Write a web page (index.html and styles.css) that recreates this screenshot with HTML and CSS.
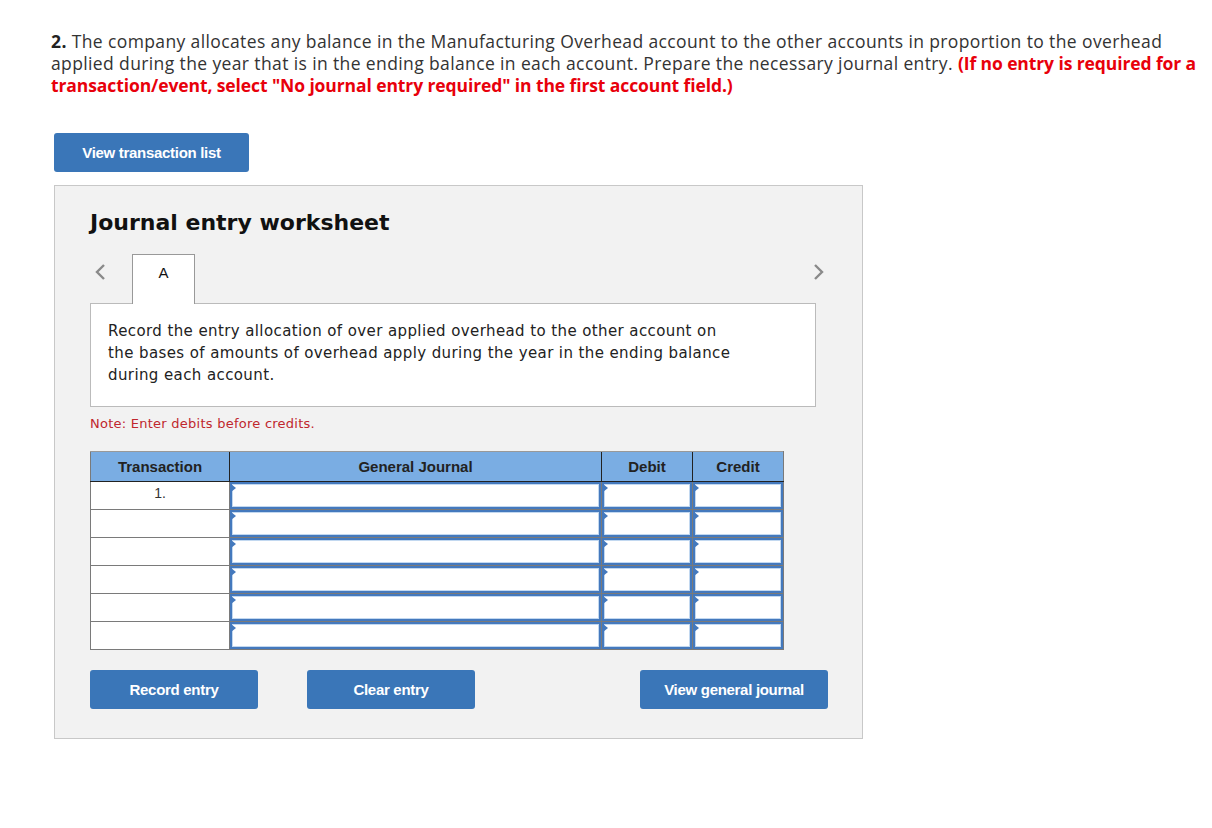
FILE: index.html
```html
<!DOCTYPE html>
<html lang="en">
<head>
    <meta charset="UTF-8">
    <title>Journal entry worksheet</title>
    <link rel="stylesheet" href="styles.css">
</head>
<body>
    <p class="question">
        <strong>2.</strong> The company allocates any balance in the Manufacturing Overhead account to the other accounts in proportion to the overhead<br>
        applied during the year that is in the ending balance in each account. Prepare the necessary journal entry. <span class="hint">(If no entry is required for a<br>
        transaction/event, select "No journal entry required" in the first account field.)</span>
    </p>

    <button class="btn btn-list">View transaction list</button>

    <div class="worksheet">
        <h2 class="ws-title">Journal entry worksheet</h2>

        <div class="tabs">
            <span class="chev">
                <svg width="14" height="18" viewBox="0 0 14 18"><path d="M11 2 L4 9 L11 16" fill="none" stroke="#8a8a8a" stroke-width="2.4"/></svg>
            </span>
            <div class="tab">A</div>
            <span class="chev chev-right">
                <svg width="14" height="18" viewBox="0 0 14 18"><path d="M3 2 L10 9 L3 16" fill="none" stroke="#8a8a8a" stroke-width="2.4"/></svg>
            </span>
        </div>

        <div class="desc">
            Record the entry allocation of over applied overhead to the other account on<br>
            the bases of amounts of overhead apply during the year in the ending balance<br>
            during each account.
        </div>

        <p class="note">Note: Enter debits before credits.</p>

        <table class="journal">
            <colgroup>
                <col class="c-tr">
                <col class="c-gj">
                <col class="c-amt">
                <col class="c-amt">
            </colgroup>
            <thead>
                <tr>
                    <th>Transaction</th>
                    <th>General Journal</th>
                    <th>Debit</th>
                    <th>Credit</th>
                </tr>
            </thead>
            <tbody>
                <tr><td class="num">1.</td><td><div class="entry"></div></td><td><div class="entry"></div></td><td><div class="entry"></div></td></tr>
                <tr><td class="num"></td><td><div class="entry"></div></td><td><div class="entry"></div></td><td><div class="entry"></div></td></tr>
                <tr><td class="num"></td><td><div class="entry"></div></td><td><div class="entry"></div></td><td><div class="entry"></div></td></tr>
                <tr><td class="num"></td><td><div class="entry"></div></td><td><div class="entry"></div></td><td><div class="entry"></div></td></tr>
                <tr><td class="num"></td><td><div class="entry"></div></td><td><div class="entry"></div></td><td><div class="entry"></div></td></tr>
                <tr><td class="num"></td><td><div class="entry"></div></td><td><div class="entry"></div></td><td><div class="entry"></div></td></tr>
            </tbody>
        </table>

        <div class="actions">
            <button class="btn btn-record">Record entry</button>
            <button class="btn btn-clear">Clear entry</button>
            <button class="btn btn-view">View general journal</button>
        </div>
    </div>
</body>
</html>
```

FILE: styles.css
```css
body {
    margin: 0;
    padding: 30px 0 0 0;
    background: #fff;
    font-family: 'Open Sans', sans-serif;
    color: #333;
}

.question {
    margin: 0 0 0 51px;
    width: 1160px;
    white-space: nowrap;
    font-size: 17.5px;
    letter-spacing: 0.38px;
    line-height: 22px;
    color: #333;
}

.question strong {
    color: #222;
}

.hint {
    color: #e8000b;
    font-weight: bold;
    letter-spacing: -0.1px;
}

.btn {
    display: block;
    border: none;
    border-radius: 3px;
    background: #3a76b8;
    color: #fff;
    font-family: 'Liberation Sans', Arial, sans-serif;
    font-weight: bold;
    font-size: 15px;
    letter-spacing: -0.3px;
    height: 39px;
    padding: 0;
    cursor: pointer;
}

.btn-list {
    margin: 37px 0 0 54px;
    width: 195px;
}

.worksheet {
    margin: 13px 0 0 54px;
    width: 772px;
    height: 552px;
    background: #f2f2f2;
    border: 1px solid #c8c8c8;
    padding: 0 0 0 35px;
}

.ws-title {
    margin: 25px 0 0 0;
    font-family: 'DejaVu Sans', Verdana, sans-serif;
    font-size: 22px;
    line-height: 24px;
    color: #111;
}

.tabs {
    display: flex;
    align-items: flex-start;
    margin-top: 19px;
    height: 49px;
    width: 736px;
}

.chev {
    width: 42px;
    padding: 9px 0 0 3px;
    box-sizing: border-box;
}

.chev-right {
    margin-left: auto;
    width: auto;
    padding: 9px 0 0 0;
}

.tab {
    width: 63px;
    height: 50px;
    background: #fff;
    border: 1px solid #999;
    border-bottom: none;
    box-sizing: border-box;
    text-align: center;
    font-family: 'Liberation Sans', Arial, sans-serif;
    font-size: 15px;
    line-height: 36px;
    color: #111;
    position: relative;
    z-index: 1;
    margin-bottom: -1px;
}

.desc {
    width: 726px;
    height: 104px;
    box-sizing: border-box;
    background: #fff;
    border: 1px solid #bbb;
    padding: 16px 0 0 17px;
    font-family: 'DejaVu Sans', Verdana, sans-serif;
    font-size: 15px;
    letter-spacing: 0.4px;
    line-height: 22px;
    color: #222;
}

.note {
    margin: 9px 0 0 0;
    font-family: 'DejaVu Sans', Verdana, sans-serif;
    font-size: 13px;
    letter-spacing: 0.25px;
    line-height: 16px;
    color: #c0272d;
}

.journal {
    margin-top: 19px;
    border-collapse: collapse;
    width: 693px;
    table-layout: fixed;
    font-family: 'Liberation Sans', Arial, sans-serif;
}

.c-tr { width: 139px; }
.c-gj { width: 372px; }
.c-amt { width: 91px; }

.journal th {
    background: #7aade3;
    height: 29px;
    padding: 0;
    font-size: 15px;
    font-weight: bold;
    color: #222;
    border-left: 1px solid #222;
    border-bottom: 1px solid #222;
    border-top: 1px solid #999;
}

.journal th:first-child {
    border-left: 1px solid #7a7a7a;
}

.journal th:last-child {
    border-right: 1px solid #7a7a7a;
}

.journal td {
    padding: 0;
    height: 27px;
    border: 1px solid #7a7a7a;
    background: #fff;
    vertical-align: top;
}

.journal td.num {
    text-align: center;
    font-size: 14px;
    line-height: 22px;
    color: #333;
}

.entry {
    position: relative;
    height: 27px;
    box-sizing: border-box;
    border: 2px solid #4479bd;
    box-shadow: inset 0 0 0 1px #c2d8f0;
    background: #fff;
}

.entry::before {
    content: "";
    position: absolute;
    left: -1px;
    top: 0;
    border-left: 5px solid #4479bd;
    border-top: 4px solid transparent;
    border-bottom: 4px solid transparent;
}

.actions {
    display: flex;
    margin-top: 20px;
    width: 738px;
}

.btn-record {
    width: 168px;
}

.btn-clear {
    width: 168px;
    margin-left: 49px;
}

.btn-view {
    width: 188px;
    margin-left: auto;
}
```
